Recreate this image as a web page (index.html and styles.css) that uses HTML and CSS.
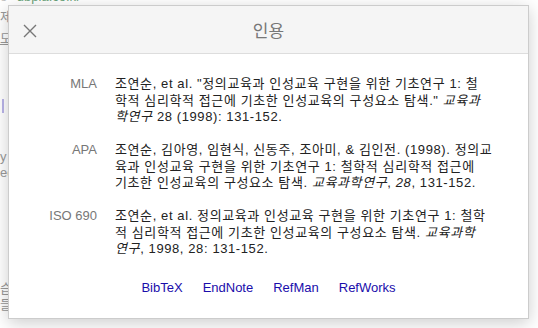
FILE: index.html
```html
<!DOCTYPE html>
<html lang="ko">
<head>
    <meta charset="UTF-8">
    <title>인용</title>
    <link rel="stylesheet" href="styles.css">
</head>
<body>
    <div class="page">
        <div class="page-src"><span class="dot">o</span> dbpia.co.kr</div>
        <div class="page-side">
            <div class="side-line">제</div>
            <div class="side-line side-link">모</div>
            <div class="side-bar"></div>
            <div class="side-line side-gap">y</div>
            <div class="side-line">ed</div>
            <div class="side-line side-gap2">습</div>
            <div class="side-line">들</div>
        </div>
    </div>

    <div class="cite-dialog">
        <div class="cite-head">
            <span class="cite-close">
                <svg width="14" height="14" viewBox="0 0 14 14"><path d="M1 1L13 13M13 1L1 13" stroke="#777" stroke-width="1.4" fill="none"/></svg>
            </span>
            <h2 class="cite-title">인용</h2>
        </div>
        <div class="cite-body">
            <div class="cite-row">
                <div class="cite-label">MLA</div>
                <div class="cite-text">조연순, et al. "정의교육과 인성교육 구현을 위한 기초연구 1: 철<br>학적 심리학적 접근에 기초한 인성교육의 구성요소 탐색." <i>교육과<br>학연구</i> 28 (1998): 131-152.</div>
            </div>
            <div class="cite-row">
                <div class="cite-label">APA</div>
                <div class="cite-text">조연순, 김아영, 임현식, 신동주, 조아미, &amp; 김인전. (1998). 정의교<br>육과 인성교육 구현을 위한 기초연구 1: 철학적 심리학적 접근에<br>기초한 인성교육의 구성요소 탐색. <i>교육과학연구</i>, <i>28</i>, 131-152.</div>
            </div>
            <div class="cite-row">
                <div class="cite-label">ISO 690</div>
                <div class="cite-text">조연순, et al. 정의교육과 인성교육 구현을 위한 기초연구 1: 철학<br>적 심리학적 접근에 기초한 인성교육의 구성요소 탐색. <i>교육과학<br>연구</i>, 1998, 28: 131-152.</div>
            </div>
        </div>
        <div class="cite-links">
            <a href="#">BibTeX</a>
            <a href="#">EndNote</a>
            <a href="#">RefMan</a>
            <a href="#">RefWorks</a>
        </div>
    </div>
</body>
</html>
```

FILE: styles.css
```css
body {
    margin: 0;
    font-family: "Liberation Sans", Arial, "Noto Sans CJK KR", sans-serif;
    background: #fff;
    color: #222;
    overflow: hidden;
}
.page {
    height: 328px;
    position: relative;
}
.page-src {
    margin-top: -10px;
    font-size: 13px;
    line-height: 13px;
    color: #006621;
    opacity: 0.6;
}
.page-src .dot {
    color: #999;
    margin-right: 6px;
}
.page-side {
    font-size: 13px;
    color: #999;
    line-height: 16px;
}
.side-line {
    height: 16px;
}
.side-line:first-child {
    margin-top: 6px;
}
.side-link {
    text-decoration: underline;
    margin-top: 6px;
}
.side-bar {
    width: 2px;
    height: 14px;
    background: #b9b4e8;
    margin: 52px 0 0 2px;
}
.side-gap {
    margin-top: 36px;
}
.side-gap2 {
    margin-top: 100px;
}

.cite-dialog {
    position: absolute;
    left: 8px;
    top: 5px;
    width: 519px;
    height: 312px;
    background: #fff;
    border: 1px solid #ccc;
    box-shadow: 0 4px 16px rgba(0,0,0,0.2);
}
.cite-head {
    height: 47px;
    background: #f5f5f5;
    border-bottom: 1px solid #ddd;
    position: relative;
    display: flex;
    align-items: center;
    justify-content: center;
}
.cite-close {
    position: absolute;
    left: 14px;
    top: 18px;
    width: 14px;
    height: 14px;
    cursor: pointer;
}
.cite-close svg {
    display: block;
}
.cite-title {
    margin: 0;
    font-size: 17px;
    font-weight: normal;
    color: #777;
}
.cite-body {
    padding: 22px 24px 0 0;
    font-size: 13px;
    line-height: 16.5px;
}
.cite-row {
    display: flex;
    margin-bottom: 16.5px;
}
.cite-label {
    width: 88px;
    flex: none;
    text-align: right;
    color: #777;
}
.cite-text {
    margin-left: 18px;
    flex: 1;
    letter-spacing: 0.6px;
}
.cite-links {
    display: flex;
    justify-content: center;
    gap: 20px;
    margin-top: 22px;
    font-size: 13px;
    line-height: 16px;
}
.cite-links a {
    color: #1a0dab;
    text-decoration: none;
}
```
